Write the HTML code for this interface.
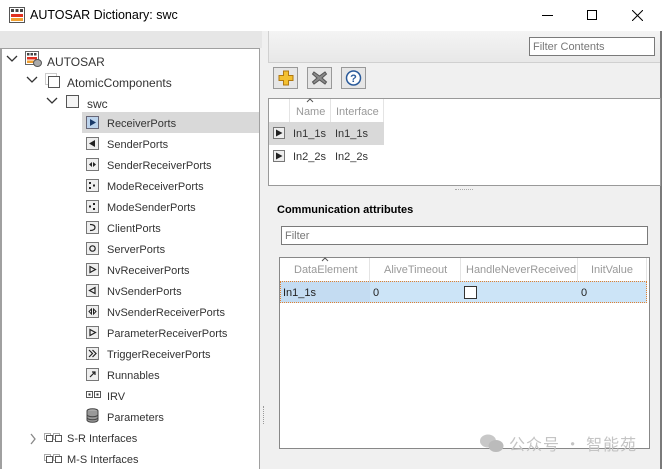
<!DOCTYPE html>
<html><head><meta charset="utf-8"><style>
*{margin:0;padding:0;box-sizing:border-box}
body{width:662px;height:469px;overflow:hidden;background:#f0f0f0;font-family:"Segoe UI","Liberation Sans","Noto Sans CJK SC",sans-serif;font-size:11px;color:#333;position:relative}
.a{position:absolute}
.t{position:absolute;white-space:nowrap;font-size:11px;color:#333;margin-top:2px}
.ib{position:absolute;width:13px;height:13px}
</style></head><body>
<div class="a" style="left:0;top:0;width:662px;height:31px;background:#fff"></div>
<svg class="a" style="left:9px;top:7px" width="16" height="16"><rect x="0.5" y="0.5" width="15" height="15" fill="#fff" stroke="#555"/><rect x="2" y="2" width="3" height="3" fill="#444"/><rect x="6.5" y="2" width="3" height="3" fill="#444"/><rect x="11" y="2" width="3" height="3" fill="#444"/><rect x="2" y="7" width="12" height="3" fill="#e03020"/><rect x="2" y="11" width="12" height="3" fill="#f0a030"/></svg>
<div class="t" style="left:30px;top:6px;font-size:12.5px;color:#000">AUTOSAR Dictionary: swc</div>
<div class="a" style="left:542px;top:15px;width:11px;height:1px;background:#000"></div>
<div class="a" style="left:587px;top:10px;width:10px;height:10px;border:1px solid #000"></div>
<svg class="a" style="left:632px;top:10px" width="11" height="11"><path d="M0 0L11 11M11 0L0 11" stroke="#000" stroke-width="1"/></svg>
<div class="a" style="left:0;top:31px;width:262px;height:17px;background:#e6e6e6"></div>
<div class="a" style="left:0;top:48px;width:260px;height:421px;background:#fff;border-left:2px solid #a0a0a0;border-right:1px solid #a0a0a0;border-top:1px solid #a0a0a0"></div>
<div class="a" style="left:82px;top:112px;width:177px;height:21px;background:#d9d9d9"></div>
<svg class="a" style="left:6px;top:55px" width="12" height="8"><path d="M1 1L6 6L11 1" fill="none" stroke="#333" stroke-width="1.3"/></svg>
<svg class="a" style="left:25px;top:51px" width="17" height="16"><rect x="0.5" y="0.5" width="13" height="13" fill="#fff" stroke="#666"/><rect x="2" y="2" width="2.5" height="2.5" fill="#444"/><rect x="5.5" y="2" width="2.5" height="2.5" fill="#444"/><rect x="9" y="2" width="2.5" height="2.5" fill="#444"/><rect x="2" y="6" width="10" height="2.5" fill="#e03020"/><rect x="2" y="9.5" width="10" height="2.5" fill="#f0a030"/><ellipse cx="12.5" cy="12" rx="4" ry="3.5" fill="#aaa" stroke="#555"/></svg>
<div class="t" style="left:47px;top:53px;font-size:12px">AUTOSAR</div>
<svg class="a" style="left:26px;top:76px" width="12" height="8"><path d="M1 1L6 6L11 1" fill="none" stroke="#333" stroke-width="1.3"/></svg>
<svg class="a" style="left:45px;top:73px" width="16" height="16"><rect x="0.5" y="0.5" width="11" height="11" fill="#fff" stroke="#ccc"/><rect x="3.5" y="3.5" width="11" height="11" fill="#fff" stroke="#555"/></svg>
<div class="t" style="left:67px;top:74px;font-size:12px">AtomicComponents</div>
<svg class="a" style="left:46px;top:97px" width="12" height="8"><path d="M1 1L6 6L11 1" fill="none" stroke="#333" stroke-width="1.3"/></svg>
<svg class="a" style="left:66px;top:95px" width="13" height="13"><rect x="0.5" y="0.5" width="12" height="12" fill="#f4f4f4" stroke="#555"/></svg>
<div class="t" style="left:87px;top:95px;font-size:12px">swc</div>

<svg class="ib" style="left:86px;top:116px"><rect x="0.5" y="0.5" width="12" height="12" fill="#bcd3ec" stroke="#667"/><path d="M4 3L10 6.5L4 10Z" fill="#1a3a6a"/></svg>
<div class="t" style="left:107px;top:116px">ReceiverPorts</div>
<svg class="ib" style="left:86px;top:137px"><rect x="0.5" y="0.5" width="12" height="12" fill="#eee" stroke="#777"/><path d="M9 3L3 6.5L9 10Z" fill="#222"/></svg>
<div class="t" style="left:107px;top:137px">SenderPorts</div>
<svg class="ib" style="left:86px;top:158px"><rect x="0.5" y="0.5" width="12" height="12" fill="#eee" stroke="#777"/><path d="M6 4L3 6.5L6 9ZM7 4L10 6.5L7 9Z" fill="#222"/></svg>
<div class="t" style="left:107px;top:158px">SenderReceiverPorts</div>
<svg class="ib" style="left:86px;top:179px"><rect x="0.5" y="0.5" width="12" height="12" fill="#eee" stroke="#777"/><rect x="3" y="3" width="2" height="2" fill="#222"/><rect x="7" y="5.5" width="2" height="2" fill="#222"/><rect x="3" y="8" width="2" height="2" fill="#222"/></svg>
<div class="t" style="left:107px;top:179px">ModeReceiverPorts</div>
<svg class="ib" style="left:86px;top:200px"><rect x="0.5" y="0.5" width="12" height="12" fill="#eee" stroke="#777"/><rect x="7" y="3" width="2" height="2" fill="#222"/><rect x="3" y="5.5" width="2" height="2" fill="#222"/><rect x="7" y="8" width="2" height="2" fill="#222"/></svg>
<div class="t" style="left:107px;top:200px">ModeSenderPorts</div>
<svg class="ib" style="left:86px;top:221px"><rect x="0.5" y="0.5" width="12" height="12" fill="#eee" stroke="#777"/><path d="M4 3.5Q9 3.5 9 6.5Q9 9.5 4 9.5" fill="none" stroke="#222" stroke-width="1.2"/></svg>
<div class="t" style="left:107px;top:221px">ClientPorts</div>
<svg class="ib" style="left:86px;top:242px"><rect x="0.5" y="0.5" width="12" height="12" fill="#eee" stroke="#777"/><circle cx="6.5" cy="6.5" r="2.7" fill="none" stroke="#222" stroke-width="1.2"/></svg>
<div class="t" style="left:107px;top:242px">ServerPorts</div>
<svg class="ib" style="left:86px;top:263px"><rect x="0.5" y="0.5" width="12" height="12" fill="#eee" stroke="#777"/><path d="M4 3.5L9.5 6.5L4 9.5Z" fill="none" stroke="#222" stroke-width="1.2"/></svg>
<div class="t" style="left:107px;top:263px">NvReceiverPorts</div>
<svg class="ib" style="left:86px;top:284px"><rect x="0.5" y="0.5" width="12" height="12" fill="#eee" stroke="#777"/><path d="M9 3.5L3.5 6.5L9 9.5Z" fill="none" stroke="#222" stroke-width="1.2"/></svg>
<div class="t" style="left:107px;top:284px">NvSenderPorts</div>
<svg class="ib" style="left:86px;top:305px"><rect x="0.5" y="0.5" width="12" height="12" fill="#eee" stroke="#777"/><path d="M5.5 4L3 6.5L5.5 9ZM7.5 4L10 6.5L7.5 9Z" fill="none" stroke="#222"/></svg>
<div class="t" style="left:107px;top:305px">NvSenderReceiverPorts</div>
<svg class="ib" style="left:86px;top:326px"><rect x="0.5" y="0.5" width="12" height="12" fill="#eee" stroke="#777"/><path d="M4 3.5L9.5 6.5L4 9.5Z" fill="none" stroke="#222" stroke-width="1.2"/></svg>
<div class="t" style="left:107px;top:326px">ParameterReceiverPorts</div>
<svg class="ib" style="left:86px;top:347px"><rect x="0.5" y="0.5" width="12" height="12" fill="#eee" stroke="#777"/><path d="M3 3L6.5 6.5L3 10M6.5 3L10 6.5L6.5 10" fill="none" stroke="#222" stroke-width="1.2"/></svg>
<div class="t" style="left:107px;top:347px">TriggerReceiverPorts</div>
<svg class="ib" style="left:86px;top:368px"><rect x="0.5" y="0.5" width="12" height="12" fill="#eee" stroke="#777"/><path d="M4 9L9 4M6 4H9V7" fill="none" stroke="#222" stroke-width="1.2"/></svg>
<div class="t" style="left:107px;top:368px">Runnables</div>
<svg class="a" style="left:86px;top:391px" width="15" height="8"><rect x="0.5" y="0.5" width="6" height="6" fill="#fff" stroke="#555"/><rect x="8.5" y="0.5" width="6" height="6" fill="#fff" stroke="#555"/><rect x="2.5" y="2.5" width="2" height="2" fill="#333"/><rect x="10.5" y="2.5" width="2" height="2" fill="#333"/></svg>
<div class="t" style="left:107px;top:389px">IRV</div>
<svg class="a" style="left:86px;top:408px" width="13" height="15"><ellipse cx="6.5" cy="3" rx="5.5" ry="2.3" fill="#aaa" stroke="#444"/><path d="M1 3V12A5.5 2.3 0 0 0 12 12V3" fill="#999" stroke="#444"/><path d="M1 6.5A5.5 2.3 0 0 0 12 6.5M1 9.5A5.5 2.3 0 0 0 12 9.5" fill="none" stroke="#444"/></svg>
<div class="t" style="left:107px;top:410px">Parameters</div>
<svg class="a" style="left:29px;top:433px" width="8" height="12"><path d="M2 1L6 6L2 11" fill="none" stroke="#888" stroke-width="1.3"/></svg>
<svg class="a" style="left:44px;top:433px" width="18" height="10"><rect x="0.5" y="0.5" width="6" height="6" fill="#fff" stroke="#aaa"/><rect x="2.5" y="2.5" width="6" height="6" fill="#fff" stroke="#555"/><rect x="9.5" y="0.5" width="6" height="6" fill="#fff" stroke="#aaa"/><rect x="11.5" y="2.5" width="6" height="6" fill="#fff" stroke="#555"/></svg>
<div class="t" style="left:67px;top:431px">S-R Interfaces</div>
<svg class="a" style="left:44px;top:454px" width="18" height="10"><rect x="0.5" y="0.5" width="6" height="6" fill="#fff" stroke="#aaa"/><rect x="2.5" y="2.5" width="6" height="6" fill="#fff" stroke="#555"/><rect x="9.5" y="0.5" width="6" height="6" fill="#fff" stroke="#aaa"/><rect x="11.5" y="2.5" width="6" height="6" fill="#fff" stroke="#555"/></svg>
<div class="t" style="left:67px;top:452px">M-S Interfaces</div>

<div class="a" style="left:263px;top:406px;width:1px;height:18px;border-left:1px dotted #999"></div>
<div class="a" style="left:268px;top:31px;width:393px;height:32px;background:linear-gradient(#f4f4f4,#e8e8e8);border:1px solid #d0d0d0;border-top:none"></div>
<div class="a" style="left:660px;top:31px;width:2px;height:438px;background:#7a7a7a"></div>
<div class="a" style="left:529px;top:37px;width:126px;height:19px;background:#fff;border:1px solid #7a7a7a"></div>
<div class="t" style="left:533px;top:39px;color:#777">Filter Contents</div>
<div class="a" style="left:273px;top:67px;width:25px;height:22px;border:1px solid #999;background:#e6e6e6"></div>
<svg class="a" style="left:278px;top:70px" width="16" height="16"><path d="M5.5 1H10.5V5.5H15V10.5H10.5V15H5.5V10.5H1V5.5H5.5Z" fill="#f3c030" stroke="#b07810"/></svg>
<div class="a" style="left:307px;top:67px;width:25px;height:22px;border:1px solid #999;background:#e6e6e6"></div>
<svg class="a" style="left:311px;top:70px" width="17" height="16"><path d="M3 2L8.5 6L14 2L15.5 4L11 8L15.5 12L14 14L8.5 10L3 14L1.5 12L6 8L1.5 4Z" fill="#8a8a8a" stroke="#555"/></svg>
<div class="a" style="left:341px;top:67px;width:25px;height:22px;border:1px solid #999;background:#e6e6e6"></div>
<svg class="a" style="left:345px;top:70px" width="17" height="16"><circle cx="8.5" cy="8" r="7" fill="#fff" stroke="#2a5a9a" stroke-width="1.5"/><text x="8.5" y="12" text-anchor="middle" font-size="11" font-weight="bold" fill="#2a5a9a" font-family="Liberation Sans">?</text></svg>
<div class="a" style="left:268px;top:98px;width:393px;height:88px;background:#fff;border:1px solid #999"></div>
<div class="a" style="left:289px;top:99px;width:1px;height:23px;background:#e4e4e4"></div>
<div class="a" style="left:330px;top:99px;width:1px;height:23px;background:#e4e4e4"></div>
<div class="a" style="left:383px;top:99px;width:1px;height:23px;background:#e4e4e4"></div>
<svg class="a" style="left:306px;top:98px" width="8" height="5"><path d="M1 4L4 1L7 4" fill="none" stroke="#555"/></svg>
<div class="t" style="left:296px;top:104px;color:#999">Name</div>
<div class="t" style="left:336px;top:104px;color:#999">Interface</div>
<div class="a" style="left:269px;top:122px;width:115px;height:23px;background:#d9d9d9"></div>
<svg class="a" style="left:273px;top:127px" width="12" height="12"><rect x="0.5" y="0.5" width="11" height="11" fill="#eee" stroke="#777"/><path d="M3 2.5L9.5 6L3 9.5Z" fill="#222"/></svg>
<div class="t" style="left:293px;top:126px">In1_1s</div><div class="t" style="left:335px;top:126px">In1_1s</div>
<svg class="a" style="left:273px;top:150px" width="12" height="12"><rect x="0.5" y="0.5" width="11" height="11" fill="#eee" stroke="#777"/><path d="M3 2.5L9.5 6L3 9.5Z" fill="#222"/></svg>
<div class="t" style="left:293px;top:149px">In2_2s</div><div class="t" style="left:335px;top:149px">In2_2s</div>
<div class="a" style="left:455px;top:189px;width:18px;height:1px;border-top:1px dotted #aaa"></div>
<div class="t" style="left:277px;top:202px;font-weight:bold;color:#000">Communication attributes</div>
<div class="a" style="left:281px;top:226px;width:367px;height:19px;background:#fff;border:1px solid #7a7a7a"></div>
<div class="t" style="left:285px;top:228px;color:#777">Filter</div>
<div class="a" style="left:279px;top:257px;width:371px;height:192px;background:#fff;border:1px solid #888"></div>
<div class="a" style="left:369px;top:258px;width:1px;height:45px;background:#e4e4e4"></div>
<div class="a" style="left:460px;top:258px;width:1px;height:45px;background:#e4e4e4"></div>
<div class="a" style="left:577px;top:258px;width:1px;height:45px;background:#e4e4e4"></div>
<div class="a" style="left:646px;top:258px;width:1px;height:23px;background:#e4e4e4"></div>
<svg class="a" style="left:321px;top:257px" width="8" height="5"><path d="M1 4L4 1L7 4" fill="none" stroke="#555"/></svg>
<div class="t" style="left:294px;top:262px;color:#999">DataElement</div>
<div class="t" style="left:384px;top:262px;color:#999">AliveTimeout</div>
<div class="t" style="left:466px;top:262px;color:#999">HandleNeverReceived</div>
<div class="t" style="left:591px;top:262px;color:#999">InitValue</div>
<div class="a" style="left:280px;top:281px;width:367px;height:22px;background:#cce4f7;border:1px dotted #e08030"></div>
<div class="a" style="left:281px;top:282px;width:89px;height:20px;background:#c4dcf2"></div>
<div class="t" style="left:283px;top:285px;color:#222">In1_1s</div>
<div class="t" style="left:373px;top:285px;color:#222">0</div>
<div class="a" style="left:464px;top:286px;width:13px;height:13px;background:#fff;border:1px solid #333"></div>
<div class="t" style="left:581px;top:285px;color:#222">0</div>
<svg class="a" style="left:479px;top:433px" width="26" height="20"><ellipse cx="9" cy="8" rx="8" ry="6.5" fill="#c8c8c8"/><ellipse cx="17" cy="13" rx="7.5" ry="6" fill="#bbb"/></svg>
<div class="t" style="left:509px;top:429px;font-size:16px;color:#c4c4c4;font-family:'Noto Sans CJK SC',sans-serif;letter-spacing:1px">公众号 · 智能苑</div>
</body></html>
